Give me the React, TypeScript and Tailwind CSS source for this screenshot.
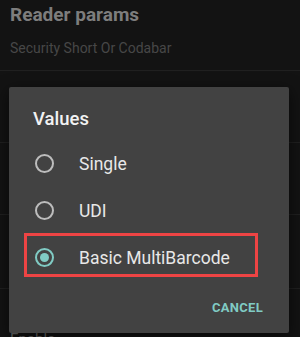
const options = ['Single', 'UDI', 'Basic MultiBarcode'];

function Radio({ checked }: { checked: boolean }) {
  return (
    <span
      className={`flex h-[19px] w-[19px] items-center justify-center rounded-full border-2 ${
        checked ? 'border-[#80cbc4]' : 'border-[#bdbdbd]'
      }`}
    >
      {checked && <span className="h-[9px] w-[9px] rounded-full bg-[#80cbc4]" />}
    </span>
  );
}

export default function App() {
  const selected = 2;

  return (
    <div
      className="relative h-[337px] w-[300px] overflow-hidden bg-[#131313]"
      style={{ fontFamily: 'Roboto, "Noto Sans", sans-serif' }}
    >
      {/* settings screen behind the dialog */}
      <div className="flex h-[71px] flex-col border-b border-[#202020] px-[10px]">
        <div className="pt-[4px] text-[19px] font-bold leading-[22px] text-[#7d7d7d]">Reader params</div>
        <div className="pt-[14px] text-[14px] leading-[17px] text-[#474747]">Security Short Or Codabar</div>
      </div>
      <div className="h-[72px] border-b border-[#202020]" />
      <div className="h-[72px] border-b border-[#202020]" />
      <div className="h-[74px] border-b border-[#202020]" />
      <div className="px-[10px] pt-[41px] text-[15px] leading-[18px] text-[#6a6a6a]">Enable</div>

      {/* dialog */}
      <div className="absolute left-[9px] top-[87px] flex h-[246px] w-[280px] flex-col rounded-[2px] bg-[#424242] shadow-[0_4px_16px_rgba(0,0,0,0.6)]">
        <div className="pl-[24px] pt-[23px] text-[18.5px] font-medium leading-none text-[#f2f2f2]">Values</div>
        <div className="mt-[11px] flex flex-col">
          {options.map((o, i) => (
            <div key={o} className="relative flex h-[47px] items-center">
              <div className="flex w-[70px] justify-center">
                <Radio checked={i === selected} />
              </div>
              <span className="pt-[2px] text-[17.5px] text-[#e8e8e8]">{o}</span>
              {i === selected && (
                <div className="absolute left-[15px] top-[-1px] h-[44px] w-[234px] border-[3px] border-[#ee4444]" />
              )}
            </div>
          ))}
        </div>
        <div className="mt-[20px] flex justify-end pr-[26px]">
          <span className="text-[13px] font-bold leading-none tracking-[0.3px] text-[#80cbc4]">CANCEL</span>
        </div>
      </div>
    </div>
  );
}
